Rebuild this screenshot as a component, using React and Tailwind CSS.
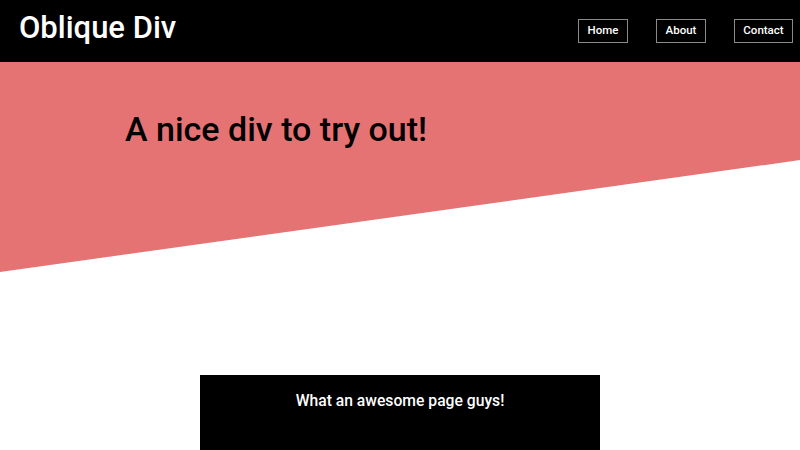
export default function App() {
  return (
    <div className="w-[800px] h-[450px] overflow-hidden bg-white font-['Roboto',sans-serif]">
      <header className="h-[62px] bg-black flex items-center justify-between pl-[19px] pr-[7px]">
        <h1 className="text-white text-[31px] leading-none font-medium pb-[8px]">Oblique Div</h1>
        <nav className="flex items-center gap-[28px]">
          <a className="border border-[#8a8a8a] text-white text-[11.5px] font-medium h-[24px] w-[50px] flex items-center justify-center">Home</a>
          <a className="border border-[#8a8a8a] text-white text-[11.5px] font-medium h-[24px] w-[50px] flex items-center justify-center">About</a>
          <a className="border border-[#8a8a8a] text-white text-[11.5px] font-medium h-[24px] w-[59px] flex items-center justify-center">Contact</a>
        </nav>
      </header>
      <section className="h-[210px] bg-[#e57373] [clip-path:polygon(0_0,100%_0,100%_46.7%,0_100%)] pl-[125px] pt-[50px]">
        <h2 className="text-black text-[34px] leading-none font-medium">A nice div to try out!</h2>
      </section>
      <div className="mt-[103px] mx-auto w-[400px] h-[100px] bg-black pt-[18px] text-center">
        <p className="text-white text-[15.7px] leading-none font-medium">What an awesome page guys!</p>
      </div>
    </div>
  );
}
